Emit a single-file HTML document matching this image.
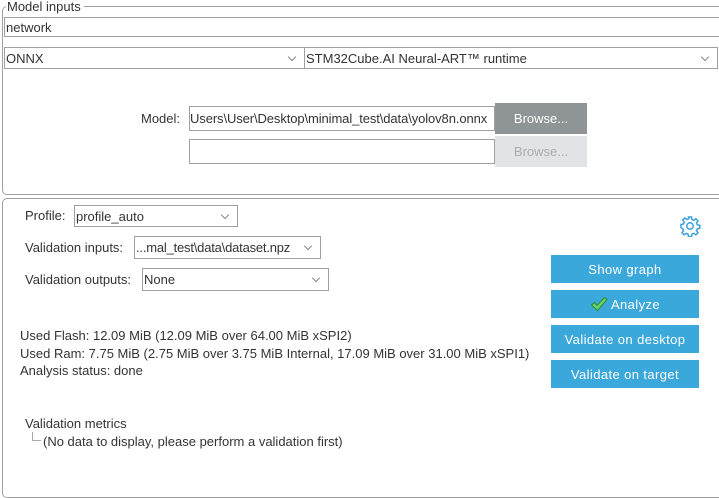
<!DOCTYPE html>
<html><head><style>
*{box-sizing:border-box;margin:0;padding:0}
body{width:719px;height:458px;background:#fff;position:relative;overflow:hidden;font-family:"Liberation Sans",sans-serif;font-size:13px;color:#333}
.a{position:absolute;white-space:nowrap}
.box{position:absolute;border:1px solid #a0a0a0;background:#fff;padding-left:1px;line-height:21px}
.dd::after{content:"";position:absolute;right:9px;top:6px;width:5px;height:5px;border-right:1px solid #888;border-bottom:1px solid #888;transform:rotate(45deg)}
.btn{position:absolute;background:#3aa8db;color:#fff;text-align:center;font-size:13px;letter-spacing:.4px}
</style></head><body>
<div class="a" style="left:2px;top:6px;width:730px;height:189px;border:1px solid #a0a0a0;border-radius:5px"></div>
<div class="a" style="left:6px;top:-1px;background:#fff;padding:0 3px 0 1px;font-size:13px">Model inputs</div>
<div class="box" style="left:4px;top:17px;width:720px;height:20px;line-height:19px">network</div>
<div class="box dd" style="left:4px;top:47px;width:301px;height:22px">ONNX</div>
<div class="box dd" style="left:304px;top:47px;width:414px;height:22px">STM32Cube.AI Neural-ART™ runtime</div>
<div class="a" style="left:141px;top:111px">Model:</div>
<div class="box" style="left:189px;top:106px;width:306px;height:25px;line-height:24px;overflow:hidden;padding-left:0;letter-spacing:-0.1px">Users\User\Desktop\minimal_test\data\yolov8n.onnx</div>
<div class="a" style="left:495px;top:103px;width:92px;height:31px;background:#8f9496;color:#fff;text-align:center;line-height:31px">Browse...</div>
<div class="box" style="left:189px;top:139px;width:306px;height:25px"></div>
<div class="a" style="left:495px;top:136px;width:92px;height:31px;background:#e1e4e6;color:#a8adb0;text-align:center;line-height:31px">Browse...</div>
<div class="a" style="left:2px;top:198px;width:730px;height:300px;border:1px solid #a0a0a0;border-radius:5px"></div>
<div class="a" style="left:25px;top:208px">Profile:</div>
<div class="box dd" style="left:74px;top:205px;width:164px;height:22px">profile_auto</div>
<div class="a" style="left:25px;top:240px">Validation inputs:</div>
<div class="box dd" style="left:134px;top:236px;width:187px;height:23px;letter-spacing:-0.2px">...mal_test\data\dataset.npz</div>
<div class="a" style="left:25px;top:272px">Validation outputs:</div>
<div class="box dd" style="left:142px;top:268px;width:187px;height:23px">None</div>
<svg class="a" style="left:679px;top:215px" width="22" height="22" viewBox="0 0 22 22"><path d="M9.5 2h3l.5 2.5 1.8.8 2.1-1.5 2.1 2.1-1.5 2.1.8 1.8 2.5.5v3l-2.5.5-.8 1.8 1.5 2.1-2.1 2.1-2.1-1.5-1.8.8-.5 2.5h-3l-.5-2.5-1.8-.8-2.1 1.5-2.1-2.1 1.5-2.1-.8-1.8L2 12.5v-3l2.5-.5.8-1.8-1.5-2.1 2.1-2.1 2.1 1.5 1.8-.8z" fill="none" stroke="#3aa0d8" stroke-width="1.5"/><circle cx="11" cy="11" r="3.2" fill="none" stroke="#3aa0d8" stroke-width="1.5"/></svg>
<div class="btn" style="left:551px;top:255px;width:148px;height:28px;line-height:29px">Show graph</div>
<div class="btn" style="left:551px;top:290px;width:148px;height:28px;line-height:29px"><svg width="18" height="16" viewBox="0 0 18 16" style="vertical-align:-3px;margin-right:3px"><path d="M1.5 9l3-2.5 2.5 3L14.5 1.5l2.5 2-9.5 11z" fill="#6cd36c" stroke="#2a8a2a" stroke-width="1"/></svg>Analyze</div>
<div class="btn" style="left:551px;top:325px;width:148px;height:28px;line-height:29px">Validate on desktop</div>
<div class="btn" style="left:551px;top:360px;width:148px;height:28px;line-height:29px">Validate on target</div>
<div class="a" style="left:20px;top:327px;line-height:17.5px">Used Flash: 12.09 MiB (12.09 MiB over 64.00 MiB xSPI2)<br>Used Ram: 7.75 MiB (2.75 MiB over 3.75 MiB Internal, 17.09 MiB over 31.00 MiB xSPI1)<br>Analysis status: done</div>
<div class="a" style="left:25px;top:416px">Validation metrics</div>
<div class="a" style="left:32px;top:432px;width:9px;height:9px;border-left:1px solid #aaa;border-bottom:1px solid #aaa"></div>
<div class="a" style="left:43px;top:434px">(No data to display, please perform a validation first)</div>
</body></html>
